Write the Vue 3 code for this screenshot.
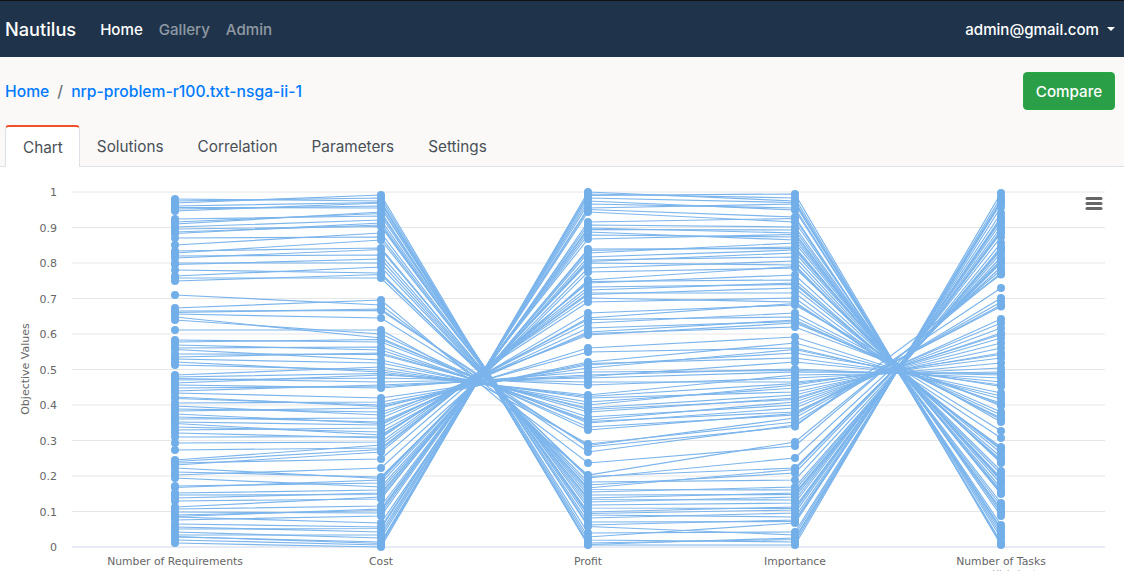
<template>
  <div class="page">
    <nav class="navbar">
      <a class="brand">Nautilus</a>
      <ul class="nav-links">
        <li class="active">Home</li>
        <li>Gallery</li>
        <li>Admin</li>
      </ul>
      <div class="user">
        <span>admin@gmail.com</span>
        <i class="caret"></i>
      </div>
    </nav>

    <header class="head">
      <div class="crumbs">
        <a>Home</a>
        <span class="sep">/</span>
        <a>nrp-problem-r100.txt-nsga-ii-1</a>
      </div>
      <button class="compare">Compare</button>
    </header>

    <ul class="tabs">
      <li v-for="tab in tabs" :key="tab" class="tab" :class="{ active: tab === 'Chart' }">{{ tab }}</li>
    </ul>

    <svg class="chart" viewBox="0 167 1124 404" width="1124" height="404">
      <line
        v-for="t in ticks"
        :key="t.label"
        class="grid"
        :class="{ base: t.label === '0' }"
        x1="72"
        x2="1105"
        :y1="t.y"
        :y2="t.y"
      />
      <text v-for="t in ticks" :key="'l' + t.label" class="tick" x="57" :y="t.y + 4">{{ t.label }}</text>
      <text class="y-title" transform="translate(29 369) rotate(-90)">Objective Values</text>

      <polyline v-for="(s, i) in series" :key="i" class="series" :points="s.points" />
      <g v-for="(s, i) in series" :key="'d' + i">
        <circle v-for="(y, j) in s.ys" :key="j" class="dot" :cx="axes[j].x" :cy="y" r="4" />
      </g>

      <text v-for="a in axes" :key="a.name" class="axis-name" :x="a.x" y="565">{{ a.name }}</text>
      <text class="credit" x="1063" y="577">Highcharts.com</text>

      <g class="menu">
        <line x1="1087" x2="1101" y1="198.5" y2="198.5" />
        <line x1="1087" x2="1101" y1="203.5" y2="203.5" />
        <line x1="1087" x2="1101" y1="208.5" y2="208.5" />
      </g>
    </svg>
  </div>
</template>

<script setup>
const tabs = ['Chart', 'Solutions', 'Correlation', 'Parameters', 'Settings']

const COUNT = 100

const ticks = [1, 0.9, 0.8, 0.7, 0.6, 0.5, 0.4, 0.3, 0.2, 0.1, 0].map((v) => ({
  label: String(v),
  y: 547 - v * 355,
}))

// dot positions read off the reference, in page pixels, top to bottom
const axes = [
  {
    name: 'Number of Requirements',
    x: 175,
    ys: [199, 201, 203, 206, 209, 211, 219, 222, 224, 227, 229, 232, 238, 245, 251, 253, 256, 258, 263, 270, 276, 278, 281, 295, 308, 311, 314, 317, 320, 330, 340, 342, 345, 348, 354, 357, 359, 362, 365, 375, 377, 380, 383, 385, 388, 391, 393, 397, 403, 406, 409, 411, 414, 417, 419, 422, 427, 430, 433, 437, 443, 450, 460, 463, 465, 468, 472, 475, 478, 486, 493, 495, 498, 501, 507, 509, 512, 515, 517, 520, 524, 527, 529, 532, 535, 537, 540, 543],
  },
  {
    name: 'Cost',
    x: 381,
    ys: [195, 198, 201, 203, 206, 208, 212, 216, 220, 223, 225, 233, 237, 240, 248, 255, 259, 263, 267, 273, 278, 300, 305, 309, 318, 330, 334, 338, 342, 347, 350, 353, 360, 363, 367, 370, 372, 375, 378, 382, 385, 388, 398, 402, 405, 408, 412, 415, 418, 422, 425, 428, 432, 435, 438, 442, 445, 448, 452, 459, 468, 477, 480, 483, 487, 490, 493, 497, 499, 506, 509, 513, 516, 523, 527, 532, 535, 538, 542, 545, 547],
  },
  {
    name: 'Profit',
    x: 588,
    ys: [192, 194, 198, 201, 204, 208, 212, 222, 225, 228, 232, 235, 239, 249, 253, 257, 260, 263, 268, 272, 280, 283, 287, 290, 293, 298, 302, 313, 318, 323, 328, 332, 335, 348, 352, 362, 365, 368, 372, 375, 378, 382, 385, 395, 398, 402, 405, 408, 412, 417, 420, 423, 427, 430, 444, 447, 452, 463, 475, 478, 482, 485, 488, 492, 495, 498, 502, 505, 508, 512, 515, 518, 522, 525, 533, 537, 540, 543, 545],
  },
  {
    name: 'Importance',
    x: 795,
    ys: [194, 198, 201, 204, 208, 210, 217, 222, 227, 230, 233, 237, 240, 243, 247, 250, 253, 257, 261, 265, 268, 275, 280, 283, 288, 293, 298, 302, 305, 313, 317, 320, 323, 327, 337, 343, 348, 353, 358, 362, 369, 372, 375, 378, 382, 385, 388, 392, 395, 398, 402, 405, 408, 412, 415, 418, 422, 425, 442, 446, 458, 468, 473, 480, 487, 490, 493, 497, 500, 503, 507, 510, 513, 517, 520, 523, 532, 535, 538, 542, 545],
  },
  {
    name: 'Number of Tasks',
    x: 1001,
    ys: [193, 197, 200, 203, 207, 213, 217, 220, 223, 227, 230, 233, 237, 243, 247, 250, 253, 257, 260, 263, 267, 270, 273, 288, 298, 302, 305, 319, 323, 328, 333, 338, 343, 348, 353, 358, 363, 368, 372, 375, 378, 382, 385, 393, 396, 399, 403, 406, 412, 415, 418, 422, 431, 438, 447, 450, 453, 457, 460, 463, 471, 474, 478, 481, 484, 488, 491, 494, 503, 506, 509, 513, 516, 525, 528, 532, 535, 538, 542, 545],
  },
]

// lists differ in length, so top them up with a neighbour of an existing dot
function fill(list) {
  const out = [...list]
  const missing = COUNT - list.length
  for (let k = 0; k < missing; k++) {
    out.push(list[Math.floor(((k + 0.5) * list.length) / missing)] + 1.5)
  }
  return out.sort((a, b) => a - b)
}

function jitter(seed) {
  const order = Array.from({ length: COUNT }, (_, i) => i)
  let r = seed
  let i = 0
  while (i < COUNT - 3) {
    r = (r * 1103515245 + 12345) % 2147483648
    const j = i + 1 + (r >> 8) % 2
    ;[order[i], order[j]] = [order[j], order[i]]
    i = j + 1 + (r >> 12) % 2
  }
  return order
}

const filled = axes.map((a) => fill(a.ys))
const reqToCost = jitter(7)
const profitToImportance = jitter(41)

const series = Array.from({ length: COUNT }, (_, i) => {
  const cost = reqToCost[i]
  const profit = COUNT - 1 - cost
  const importance = profitToImportance[profit]
  const tasks = COUNT - 1 - importance
  const ys = [filled[0][i], filled[1][cost], filled[2][profit], filled[3][importance], filled[4][tasks]]
  return { ys, points: ys.map((y, j) => `${axes[j].x},${y}`).join(' ') }
})
</script>

<style scoped>
.page {
  width: 1124px;
  height: 571px;
  overflow: hidden;
  background: #fff;
  font-family: Inter, "Liberation Sans", sans-serif;
  font-size: 15.1px;
  color: #212529;
}

.navbar {
  display: flex;
  align-items: center;
  height: 56px;
  margin-top: 1px;
  padding: 0 9px 0 5px;
  background: #1f344a;
  box-shadow: 0 -1px 0 #111;
}

.brand {
  margin-right: 24px;
  font-size: 18.2px;
  font-weight: 500;
  color: #fff;
}

.nav-links {
  display: flex;
  gap: 16px;
  margin: 0;
  padding: 0;
  list-style: none;
  font-weight: 500;
  color: rgba(255, 255, 255, 0.5);
}

.nav-links .active {
  color: #fff;
}

.user {
  display: flex;
  align-items: center;
  margin-left: auto;
  font-weight: 500;
  color: #fff;
}

.caret {
  width: 0;
  height: 0;
  margin-left: 8px;
  border-top: 4.5px solid #fff;
  border-left: 4.5px solid transparent;
  border-right: 4.5px solid transparent;
}

.head {
  display: flex;
  align-items: center;
  justify-content: space-between;
  height: 68px;
  padding: 0 9px 0 5px;
  background: #faf9f7;
}

.crumbs {
  font-size: 15.7px;
  font-weight: 500;
}

.crumbs a {
  color: #007bff;
}

.sep {
  margin: 0 8px;
  color: #6c757d;
}

.compare {
  width: 92px;
  height: 38px;
  border: 1px solid #28a745;
  border-radius: 4px;
  background: #2b9f48;
  color: #fff;
  font: inherit;
  font-size: 15.2px;
  font-weight: 500;
}

.tabs {
  display: flex;
  height: 42px;
  margin: 0;
  padding: 0 0 0 5px;
  list-style: none;
  background: #faf9f7;
  border-bottom: 1px solid #dee2e6;
  font-size: 15.3px;
  color: #495057;
  box-sizing: border-box;
}

.tab {
  padding: 12px 17px 0;
}

.tab.active {
  height: 42px;
  padding: 11px 16px 0 17px;
  box-sizing: border-box;
  background: #fff;
  border: 1px solid #dee2e6;
  border-top: 2px solid #f0502a;
  border-bottom: 0;
  border-radius: 4px 4px 0 0;
}

.chart {
  display: block;
  font-family: "DejaVu Sans", sans-serif;
}

.grid {
  stroke: #e6e6e6;
  stroke-width: 1;
}

.grid.base {
  stroke: #ccd6eb;
}

.tick {
  font-size: 11px;
  text-anchor: end;
  fill: #666;
}

.y-title {
  font-size: 11px;
  text-anchor: middle;
  fill: #666;
}

.series {
  fill: none;
  stroke: #7cb5ec;
  stroke-width: 1.2;
}

.dot {
  fill: #72aee8;
}

.axis-name {
  font-size: 10.8px;
  text-anchor: middle;
  fill: #666;
}

.credit {
  font-size: 9px;
  text-anchor: end;
  fill: #999;
}

.menu line {
  stroke: #666;
  stroke-width: 3;
  stroke-linecap: round;
}
</style>

<style>
html,
body {
  margin: 0;
  overflow: hidden;
}
</style>
